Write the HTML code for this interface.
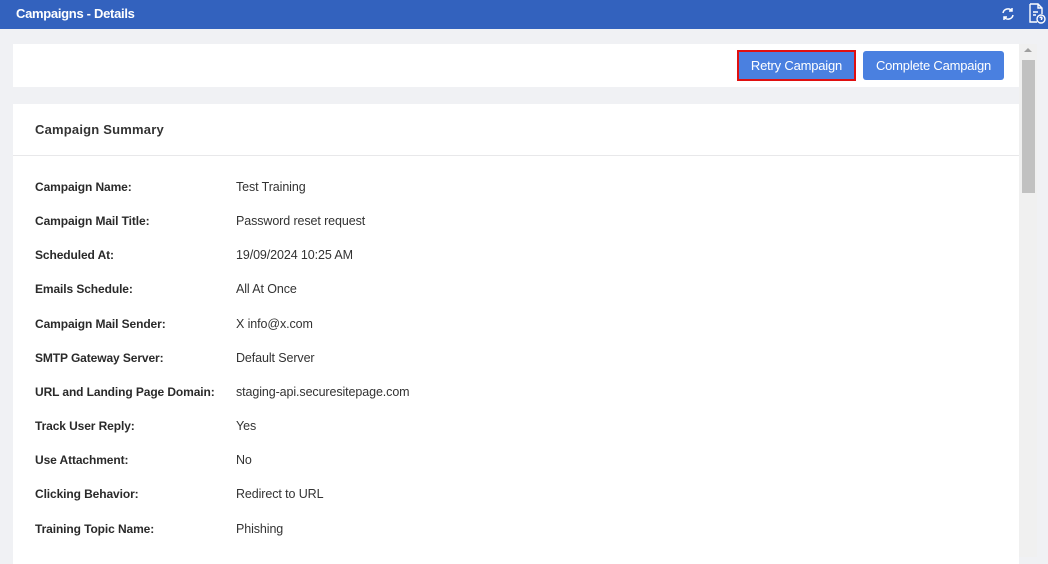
<!DOCTYPE html>
<html><head><style>
*{margin:0;padding:0;box-sizing:border-box}
body{width:1048px;height:557px;overflow:hidden;background:#f0f1f4;font-family:"Liberation Sans",sans-serif;position:relative}
.hdr{position:absolute;left:0;top:0;width:1048px;height:29px;background:#3362be;color:#fff;font-weight:bold;font-size:13px;line-height:28px;padding-left:16px;letter-spacing:-0.3px}
.top{position:absolute;left:13px;top:44px;width:1006px;height:43px;background:#fff}
.btn{position:absolute;top:7px;height:29px;background:#4a80e0;color:#fff;font-size:13px;line-height:29px;text-align:center;border-radius:3px;letter-spacing:-0.2px}
.card{position:absolute;left:13px;top:104px;width:1006px;height:460px;background:#fff}
.ct{position:absolute;left:22px;top:18px;font-size:13px;font-weight:bold;color:#333;letter-spacing:0.2px}
.div{position:absolute;left:0;top:51px;width:1006px;height:1px;background:#e8e8ea}
.row{position:absolute;left:22px;font-size:12.5px;color:#222;letter-spacing:-0.1px}
.row b{position:absolute;left:0;white-space:nowrap;font-weight:bold;color:#2a2a2a;font-size:12px}
.row span{position:absolute;left:201px;white-space:nowrap;color:#333}
.sb{position:absolute;left:1019px;top:44px;width:18px;height:513px;background:#f0f0f0}
.th{position:absolute;left:1022px;top:60px;width:13px;height:133px;background:#c1c1c1}
</style></head><body>
<div class="hdr">Campaigns - Details</div>
<svg style="position:absolute;left:1000px;top:6px" width="16" height="16" viewBox="0 0 16 16" fill="none" stroke="#fff" stroke-width="1.5"><path d="M3 7a5 5 0 0 1 9-2M13 9a5 5 0 0 1-9 2"/><path d="M12 2v3h-3M4 14v-3h3"/></svg>
<svg style="position:absolute;left:1028px;top:3px" width="18" height="21" viewBox="0 0 18 21" fill="none" stroke="#fff" stroke-width="1.4"><path d="M2 1h8l4 4v6M10 1v4h4M2 1v18h7"/><path d="M5 9h5M5 12h3"/><circle cx="13" cy="16" r="4"/><path d="M12 15a1 1 0 1 1 1.5 1v1"/></svg>
<div class="top">
<div class="btn" style="left:724px;width:119px;border:2px solid #e01010;border-radius:0;line-height:28px;top:6px;height:31px">Retry Campaign</div>
<div class="btn" style="left:850px;width:141px">Complete Campaign</div>
</div>
<div class="card">
<div class="ct">Campaign Summary</div>
<div class="div"></div>
<div class="row" style="top:76px"><b>Campaign Name:</b><span>Test Training</span></div>
<div class="row" style="top:110px"><b>Campaign Mail Title:</b><span>Password reset request</span></div>
<div class="row" style="top:144px"><b>Scheduled At:</b><span>19/09/2024 10:25 AM</span></div>
<div class="row" style="top:178px"><b>Emails Schedule:</b><span>All At Once</span></div>
<div class="row" style="top:213px"><b>Campaign Mail Sender:</b><span>X info@x.com</span></div>
<div class="row" style="top:247px"><b>SMTP Gateway Server:</b><span>Default Server</span></div>
<div class="row" style="top:281px"><b>URL and Landing Page Domain:</b><span>staging-api.securesitepage.com</span></div>
<div class="row" style="top:315px"><b>Track User Reply:</b><span>Yes</span></div>
<div class="row" style="top:349px"><b>Use Attachment:</b><span>No</span></div>
<div class="row" style="top:383px"><b>Clicking Behavior:</b><span>Redirect to URL</span></div>
<div class="row" style="top:418px"><b>Training Topic Name:</b><span>Phishing</span></div>
</div>
<div class="sb"></div>
<div style="position:absolute;left:1024px;top:48px;width:0;height:0;border-left:4px solid transparent;border-right:4px solid transparent;border-bottom:4px solid #a0a0a0"></div>
<div class="th"></div>
</body></html>
